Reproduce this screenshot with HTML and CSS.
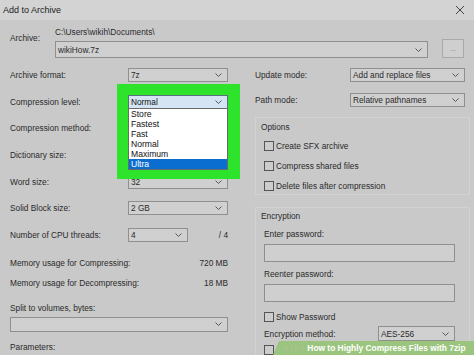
FILE: index.html
```html
<!DOCTYPE html>
<html lang="en">
<head>
    <meta charset="UTF-8">
    <meta name="viewport" content="width=device-width, initial-scale=1.0">
    <title>Add to Archive</title>
    <link rel="stylesheet" href="styles.css">
</head>
<body>
    <div class="window">
        <!-- Title bar -->
        <div class="titlebar">
            <span class="title">Add to Archive</span>
            <svg class="close" width="10" height="10" viewBox="0 0 10 10"><path d="M1 1L9 9M9 1L1 9" stroke="#444" stroke-width="1" fill="none"/></svg>
        </div>

        <!-- Archive name -->
        <div class="archive">
            <div class="archive-label">Archive:</div>
            <div class="archive-fields">
                <div class="path">C:\Users\wikih\Documents\</div>
                <div class="combo archive-combo">
                    <span>wikiHow.7z</span>
                    <svg class="chev" width="7" height="4" viewBox="0 0 7 4"><path d="M0.5 0.5L3.5 3.5L6.5 0.5" stroke="#555" fill="none"/></svg>
                </div>
            </div>
            <div class="browse">...</div>
        </div>

        <div class="columns">
            <!-- Left column -->
            <div class="left">
                <div class="grid">
                    <div class="label">Archive format:</div>
                    <div class="combo"><span>7z</span><svg class="chev" width="7" height="4" viewBox="0 0 7 4"><path d="M0.5 0.5L3.5 3.5L6.5 0.5" stroke="#555" fill="none"/></svg></div>

                    <div class="label">Compression level:</div>
                    <div class="level">
                        <div class="highlight"></div>
                        <div class="combo open"><span>Normal</span><svg class="chev" width="7" height="4" viewBox="0 0 7 4"><path d="M0.5 0.5L3.5 3.5L6.5 0.5" stroke="#555" fill="none"/></svg></div>
                        <ul class="dropdown">
                            <li>Store</li>
                            <li>Fastest</li>
                            <li>Fast</li>
                            <li>Normal</li>
                            <li>Maximum</li>
                            <li class="selected">Ultra</li>
                        </ul>
                    </div>

                    <div class="label">Compression method:</div>
                    <div class="combo"></div>

                    <div class="label">Dictionary size:</div>
                    <div class="combo"></div>

                    <div class="label">Word size:</div>
                    <div class="combo"><span>32</span><svg class="chev" width="7" height="4" viewBox="0 0 7 4"><path d="M0.5 0.5L3.5 3.5L6.5 0.5" stroke="#555" fill="none"/></svg></div>

                    <div class="label">Solid Block size:</div>
                    <div class="combo"><span>2 GB</span><svg class="chev" width="7" height="4" viewBox="0 0 7 4"><path d="M0.5 0.5L3.5 3.5L6.5 0.5" stroke="#555" fill="none"/></svg></div>

                    <div class="label">Number of CPU threads:</div>
                    <div class="threads">
                        <div class="combo small"><span>4</span><svg class="chev" width="7" height="4" viewBox="0 0 7 4"><path d="M0.5 0.5L3.5 3.5L6.5 0.5" stroke="#555" fill="none"/></svg></div>
                        <span>/ 4</span>
                    </div>
                </div>

                <div class="memory first"><span>Memory usage for Compressing:</span><span>720 MB</span></div>
                <div class="memory"><span>Memory usage for Decompressing:</span><span>18 MB</span></div>

                <div class="text split-label">Split to volumes, bytes:</div>
                <div class="combo split"><span></span><svg class="chev" width="7" height="4" viewBox="0 0 7 4"><path d="M0.5 0.5L3.5 3.5L6.5 0.5" stroke="#555" fill="none"/></svg></div>
                <div class="text params">Parameters:</div>
            </div>

            <!-- Right column -->
            <div class="right">
                <div class="rrow">
                    <div class="label">Update mode:</div>
                    <div class="combo wide"><span>Add and replace files</span><svg class="chev" width="7" height="4" viewBox="0 0 7 4"><path d="M0.5 0.5L3.5 3.5L6.5 0.5" stroke="#555" fill="none"/></svg></div>
                </div>
                <div class="rrow">
                    <div class="label">Path mode:</div>
                    <div class="combo wide"><span>Relative pathnames</span><svg class="chev" width="7" height="4" viewBox="0 0 7 4"><path d="M0.5 0.5L3.5 3.5L6.5 0.5" stroke="#555" fill="none"/></svg></div>
                </div>

                <div class="group options">
                    <div class="group-title">Options</div>
                    <label class="check"><span class="box"></span>Create SFX archive</label>
                    <label class="check"><span class="box"></span>Compress shared files</label>
                    <label class="check"><span class="box"></span>Delete files after compression</label>
                </div>

                <div class="group encryption">
                    <div class="group-title">Encryption</div>
                    <div class="text">Enter password:</div>
                    <div class="input"></div>
                    <div class="text">Reenter password:</div>
                    <div class="input"></div>
                    <label class="check"><span class="box"></span>Show Password</label>
                    <div class="enc-row">
                        <div class="label">Encryption method:</div>
                        <div class="combo enc"><span>AES-256</span><svg class="chev" width="7" height="4" viewBox="0 0 7 4"><path d="M0.5 0.5L3.5 3.5L6.5 0.5" stroke="#555" fill="none"/></svg></div>
                    </div>
                    <label class="check last"><span class="box"></span></label>
                </div>
            </div>
        </div>

        <!-- wikiHow banner -->
        <div class="watermark"><span class="wiki">wiki</span>How to Highly Compress Files with 7zip</div>
    </div>
</body>
</html>
```

FILE: styles.css
```css
/* Base */
body {
    margin: 0;
    font-family: "Liberation Sans", Arial, sans-serif;
    font-size: 8.3px;
    color: #2a2a2a;
}
.window {
    position: relative;
    width: 474px;
    height: 355px;
    overflow: hidden;
    background-color: #c9c9c9;
}
/* Title bar */
.titlebar {
    height: 20px;
    display: flex;
    align-items: center;
    justify-content: space-between;
    padding: 0 9px 0 3px;
    background-color: #d3d3d3;
}
.title {
    font-size: 9px;
    color: #222;
}
/* Archive row */
.archive {
    display: flex;
    padding: 6px 0 0 10px;
    height: 32px;
}
.archive-label {
    width: 45px;
    margin-top: 7px;
}
.archive-fields {
    width: 373px;
}
.path {
    height: 13px;
    line-height: 13px;
}
.archive-combo {
    height: 17px !important;
    margin-top: 2px;
}
.browse {
    width: 20px;
    height: 17px;
    margin: 13px 0 0 14px;
    border: 1px solid #a9a9a9;
    background-color: #cfcfcf;
    color: #777;
    font-size: 7px;
    text-align: center;
    line-height: 17px;
}
/* Generic combo box */
.combo {
    box-sizing: border-box;
    height: 14px;
    display: flex;
    align-items: center;
    justify-content: space-between;
    padding: 0 5px 0 2px;
    border: 1px solid #8f8f8f;
    background-color: #d0d0d0;
}
.chev {
    display: block;
}
.columns {
    display: flex;
    margin-top: 10px;
    padding-left: 10px;
}
/* Left column */
.left {
    width: 218px;
}
.grid {
    display: grid;
    grid-template-columns: 118px 100px;
    grid-auto-rows: 14px;
    row-gap: 12.67px;
    align-items: center;
}
.level {
    position: relative;
    height: 14px;
}
.highlight {
    position: absolute;
    left: -11px;
    top: -11px;
    width: 123px;
    height: 95px;
    background-color: #2ee32c;
    z-index: 1;
}
.combo.open {
    position: relative;
    z-index: 2;
    height: 14px;
    border-color: #5a6f86;
    background-color: #d5e4f2;
    color: #111;
}
.dropdown {
    position: absolute;
    left: 0;
    top: 13px;
    width: 100px;
    box-sizing: border-box;
    margin: 0;
    padding: 0;
    list-style: none;
    border: 1px solid #6a6a6a;
    background-color: #fff;
    z-index: 2;
}
.dropdown li {
    height: 10px;
    line-height: 10px;
    padding-left: 2px;
    color: #111;
    font-size: 8.6px;
}
.dropdown li.selected {
    background-color: #0a6ed1;
    color: #fff;
}
.threads {
    display: flex;
    justify-content: space-between;
    align-items: center;
}
.combo.small {
    width: 60px;
}
.memory {
    display: flex;
    justify-content: space-between;
    height: 12px;
    line-height: 12px;
    margin-top: 8px;
}
.memory.first {
    margin-top: 15px;
}
.text {
    height: 12px;
    line-height: 12px;
}
.split-label {
    margin-top: 13px;
}
.combo.split {
    height: 15px;
    margin-top: 3px;
}
.params {
    margin-top: 9px;
}
/* Right column */
.right {
    width: 215px;
    margin-left: 27px;
}
.rrow {
    display: flex;
    justify-content: space-between;
    align-items: center;
    width: 210px;
    margin-bottom: 11px;
}
.combo.wide {
    width: 115px;
}
.group {
    box-sizing: border-box;
    border: 1px solid #d2d2d2;
    padding: 3px 0 0 8px;
}
.options {
    height: 78px;
    margin-top: -1px;
}
.group-title {
    height: 12px;
    line-height: 12px;
    margin-left: -3px;
}
.check {
    display: flex;
    align-items: center;
    height: 10px;
    margin-top: 10px;
}
.options .check:first-of-type {
    margin-top: 8px;
}
.box {
    box-sizing: border-box;
    width: 10px;
    height: 10px;
    margin-right: 2px;
    border: 1px solid #555;
    background-color: #cdcdcd;
}
.encryption {
    height: 160px;
    margin-top: 12px;
    padding-top: 2px;
}
.encryption .text {
    margin-top: 6px;
}
.input {
    box-sizing: border-box;
    width: 191px;
    height: 18px;
    margin-top: 4px;
    border: 1px solid #8f8f8f;
    background-color: #cfcfcf;
}
.encryption .check {
    margin-top: 10px;
}
.enc-row {
    display: flex;
    justify-content: space-between;
    align-items: center;
    width: 191px;
    margin-top: 4px;
}
.combo.enc {
    width: 77px;
    height: 15px;
}
.encryption .check.last {
    margin-top: 4px;
}
/* Banner */
.watermark {
    position: absolute;
    right: 0;
    bottom: 0;
    width: 192px;
    height: 14px;
    padding-left: 9px;
    line-height: 14px;
    background-color: rgba(150, 196, 118, 0.9);
    clip-path: polygon(6px 0, 100% 0, 100% 100%, 0 100%);
    color: #fff;
    font-weight: bold;
    font-size: 8.4px;
    white-space: nowrap;
}
.wiki {
    font-family: "Liberation Serif", serif;
    font-size: 10px;
    letter-spacing: 1px;
    color: #a9c290;
    margin-right: 3px;
}
```
